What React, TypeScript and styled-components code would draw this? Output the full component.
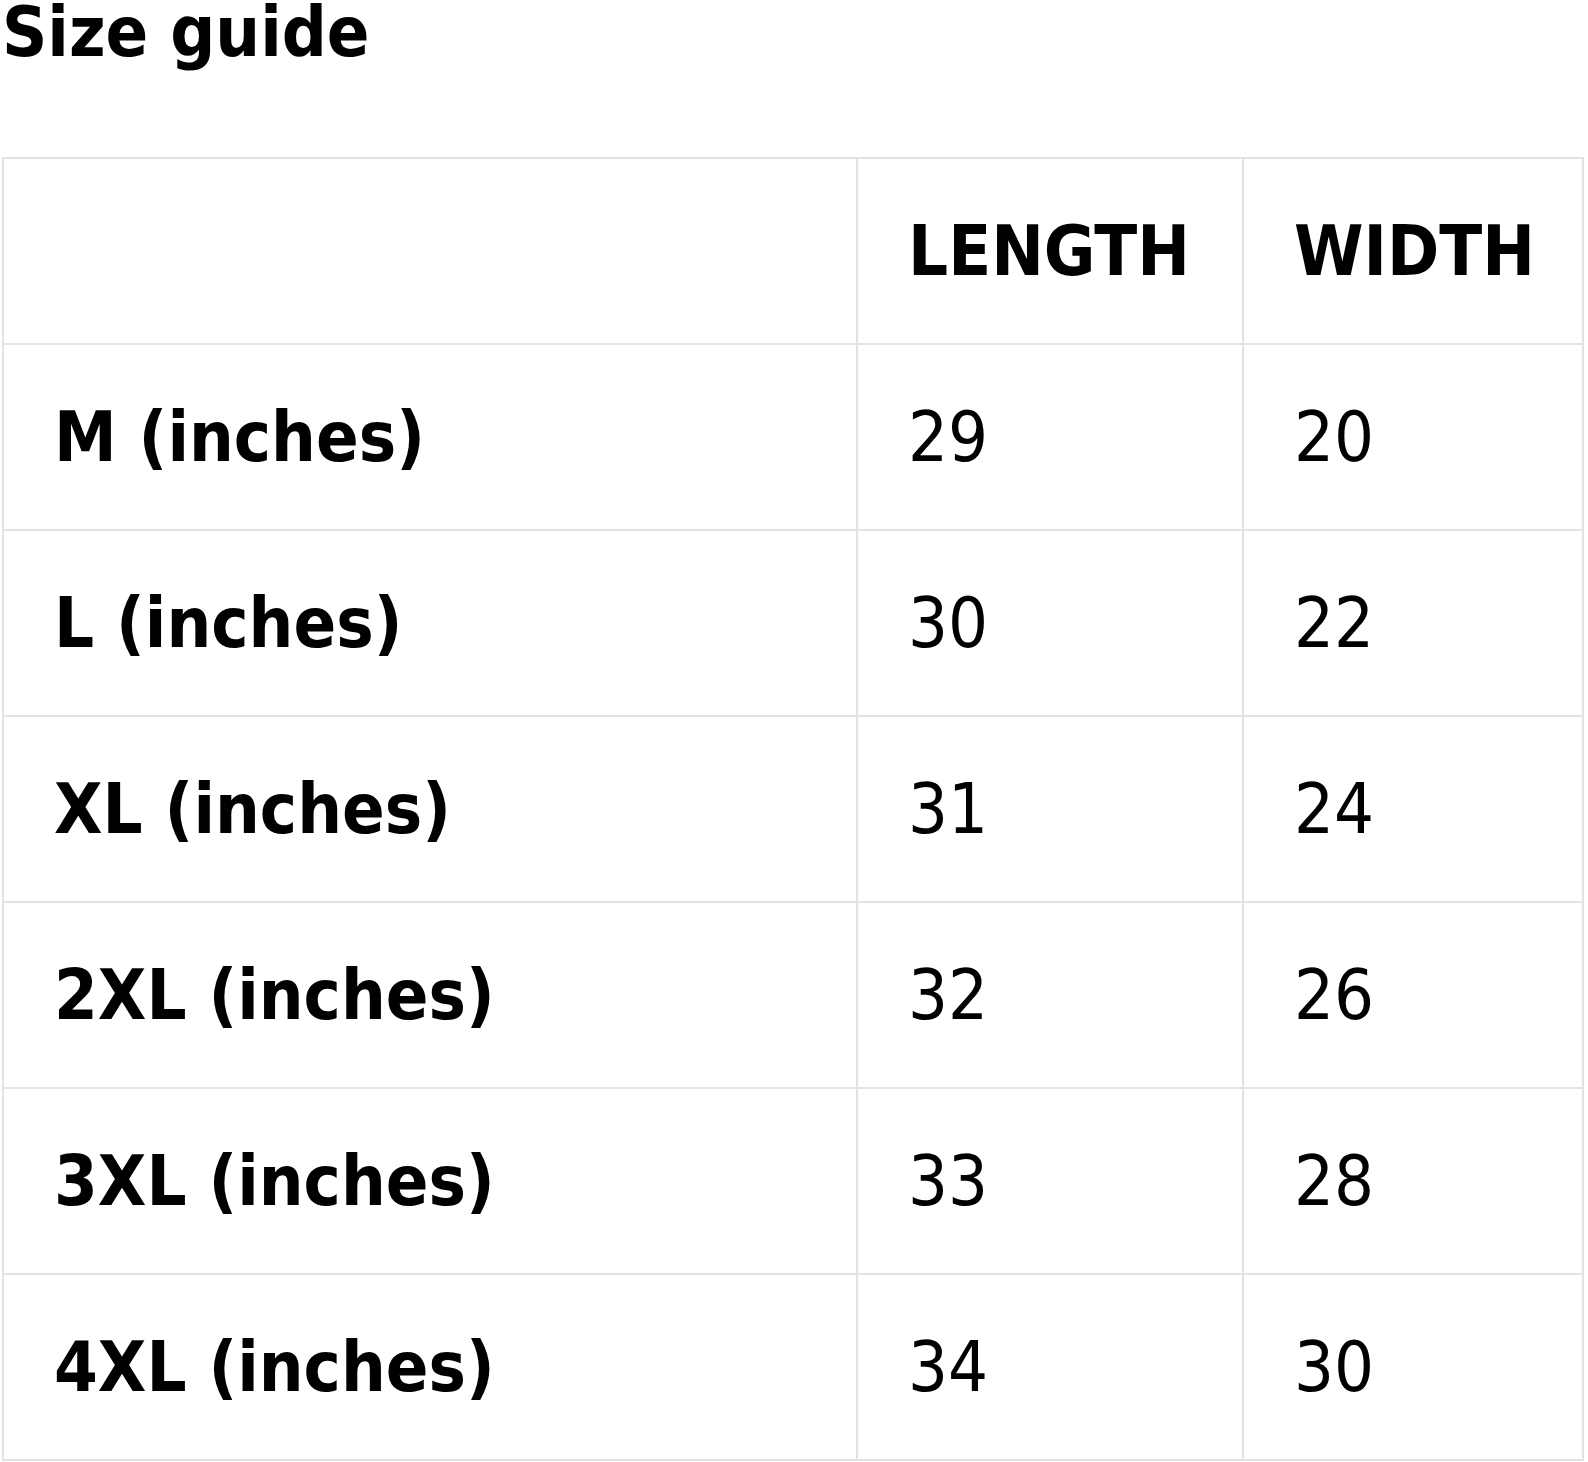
import styled, {createGlobalStyle} from 'styled-components'

const GlobalStyle = createGlobalStyle`
    body {
        margin: 0;
        background: #fff;
        color: #000;
        font-family: "DejaVu Sans Condensed", "DejaVu Sans", "Liberation Sans", sans-serif;
        font-stretch: condensed;
    }
`

const sizes = [
    {label: 'M', length: 29, width: 20},
    {label: 'L', length: 30, width: 22},
    {label: 'XL', length: 31, width: 24},
    {label: '2XL', length: 32, width: 26},
    {label: '3XL', length: 33, width: 28},
    {label: '4XL', length: 34, width: 30},
]

export default function App() {
    return (
        <Page>
            <GlobalStyle/>
            <Title>Size guide</Title>
            <SizeTable>
                <colgroup>
                    <col style={{width: 854}}/>
                    <col style={{width: 386}}/>
                    <col style={{width: 340}}/>
                </colgroup>
                <thead>
                <tr>
                    <Cell as="th"></Cell>
                    <Cell as="th" $bold>LENGTH</Cell>
                    <Cell as="th" $bold>WIDTH</Cell>
                </tr>
                </thead>
                <tbody>
                {sizes.map(s => (
                    <tr key={s.label}>
                        <Cell $bold>{s.label} (inches)</Cell>
                        <Cell>{s.length}</Cell>
                        <Cell>{s.width}</Cell>
                    </tr>
                ))}
                </tbody>
            </SizeTable>
        </Page>
    )
}

const Page = styled.div`
    width: 1588px;
    padding-left: 2px;
    box-sizing: border-box;
`

const Title = styled.h2`
    margin: 0;
    font-size: 70px;
    line-height: 64px;
    font-weight: bold;
`

const SizeTable = styled.table`
    margin-top: 93px;
    width: 1580px;
    border-collapse: collapse;
    table-layout: fixed;
    font-size: 70px;
`

const Cell = styled.td<{ $bold?: boolean }>`
    border: 2px solid #e3e3e3;
    height: 184px;
    padding: 0 50px;
    text-align: left;
    vertical-align: middle;
    font-weight: ${p => p.$bold ? 'bold' : 'normal'};
    white-space: nowrap;
`
